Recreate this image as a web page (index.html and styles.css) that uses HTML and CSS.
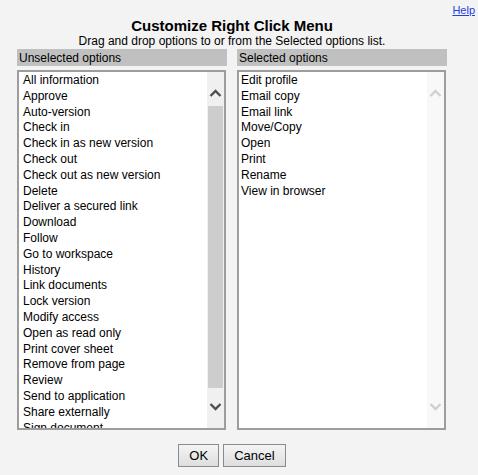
FILE: index.html
```html
<!DOCTYPE html>
<html>
<head>
<meta charset="utf-8">
<link rel="stylesheet" href="styles.css">
</head>
<body>
<div class="topbar"><a class="help" href="#">Help</a></div>
<div class="main">
  <h1 class="title">Customize Right Click Menu</h1>
  <p class="subtitle">Drag and drop options to or from the Selected options list.</p>
  <div class="columns">
    <div class="column">
      <div class="col-head">Unselected options</div>
      <div class="listbox">
        <ul class="items items-left">
          <li>All information</li>
          <li>Approve</li>
          <li>Auto-version</li>
          <li>Check in</li>
          <li>Check in as new version</li>
          <li>Check out</li>
          <li>Check out as new version</li>
          <li>Delete</li>
          <li>Deliver a secured link</li>
          <li>Download</li>
          <li>Follow</li>
          <li>Go to workspace</li>
          <li>History</li>
          <li>Link documents</li>
          <li>Lock version</li>
          <li>Modify access</li>
          <li>Open as read only</li>
          <li>Print cover sheet</li>
          <li>Remove from page</li>
          <li>Review</li>
          <li>Send to application</li>
          <li>Share externally</li>
          <li>Sign document</li>
        </ul>
        <div class="scrollbar">
          <div class="sb-up"><svg width="13" height="8" viewBox="0 0 13 8"><polyline points="1.5,7 6.5,2 11.5,7" fill="none" stroke-width="2.4"/></svg></div>
          <div class="sb-thumb"></div>
          <div class="sb-down"><svg width="13" height="8" viewBox="0 0 13 8"><polyline points="1.5,1 6.5,6 11.5,1" fill="none" stroke-width="2.4"/></svg></div>
        </div>
      </div>
    </div>
    <div class="column">
      <div class="col-head">Selected options</div>
      <div class="listbox">
        <ul class="items items-right">
          <li>Edit profile</li>
          <li>Email copy</li>
          <li>Email link</li>
          <li>Move/Copy</li>
          <li>Open</li>
          <li>Print</li>
          <li>Rename</li>
          <li>View in browser</li>
        </ul>
        <div class="scrollbar disabled">
          <div class="sb-up"><svg width="13" height="8" viewBox="0 0 13 8"><polyline points="1.5,7 6.5,2 11.5,7" fill="none" stroke-width="2.4"/></svg></div>
          <div class="sb-thumb"></div>
          <div class="sb-down"><svg width="13" height="8" viewBox="0 0 13 8"><polyline points="1.5,1 6.5,6 11.5,1" fill="none" stroke-width="2.4"/></svg></div>
        </div>
      </div>
    </div>
  </div>
  <div class="buttons">
    <button class="btn">OK</button>
    <button class="btn">Cancel</button>
  </div>
</div>
</body>
</html>
```
FILE: styles.css
```css
html, body {
  margin: 0;
  padding: 0;
  background: #f3f3f3;
  font-family: "Liberation Sans", Arial, sans-serif;
  color: #000;
}
.topbar {
  display: flex;
  justify-content: flex-end;
  padding: 4px 3px 0 0;
  height: 13px;
}
.help {
  font-size: 11px;
  line-height: 13px;
  color: #1f3fe0;
  text-decoration: underline;
}
.main {
  margin-left: 17px;
  width: 430px;
}
.title {
  margin: 1px 0 0;
  font-size: 15px;
  font-weight: bold;
  line-height: 16px;
  text-align: center;
}
.subtitle {
  margin: 0;
  font-size: 12px;
  line-height: 14px;
  text-align: center;
}
.columns {
  display: flex;
  gap: 10px;
  margin-top: 1px;
}
.column {
  width: 210px;
  display: flex;
  flex-direction: column;
}
.col-head {
  height: 17px;
  box-sizing: border-box;
  padding: 1px 0 0 2px;
  line-height: 16px;
  background: #c0c0c0;
  font-size: 12px;
}
.listbox {
  margin-top: 4px;
  width: 209px;
  height: 360px;
  box-sizing: border-box;
  border: 2px solid #9d9d9d;
  background: #fff;
  display: flex;
}
.items {
  flex: 1;
  margin: 0;
  padding: 1px 0 0;
  list-style: none;
  overflow: hidden;
  font-size: 12px;
  line-height: 15.8px;
}
.items-left { padding-left: 4px; }
.items-right { padding-left: 2px; }
.scrollbar {
  width: 17px;
  background: #f0f0f0;
  display: flex;
  flex-direction: column;
}
.scrollbar svg { stroke: #505050; display: block; }
.sb-up {
  height: 34px;
  box-sizing: border-box;
  padding-top: 17px;
  display: flex;
  justify-content: center;
}
.sb-thumb {
  height: 282px;
  margin: 0 1px;
  background: #cdcdcd;
}
.sb-down {
  flex: 1;
  box-sizing: border-box;
  padding-top: 15px;
  display: flex;
  justify-content: center;
}
.scrollbar.disabled { background: #f8f8f8; }
.scrollbar.disabled svg { stroke: #d0d0d0; }
.scrollbar.disabled .sb-thumb { background: transparent; }
.buttons {
  display: flex;
  justify-content: center;
  gap: 4px;
  margin-top: 14px;
}
.btn {
  height: 23px;
  box-sizing: border-box;
  padding: 0 10px;
  border: 1px solid #8a8a8a;
  border-radius: 0;
  background: linear-gradient(#f4f4f4, #dedede);
  font-family: "Liberation Sans", Arial, sans-serif;
  font-size: 13px;
  color: #000;
}
```
